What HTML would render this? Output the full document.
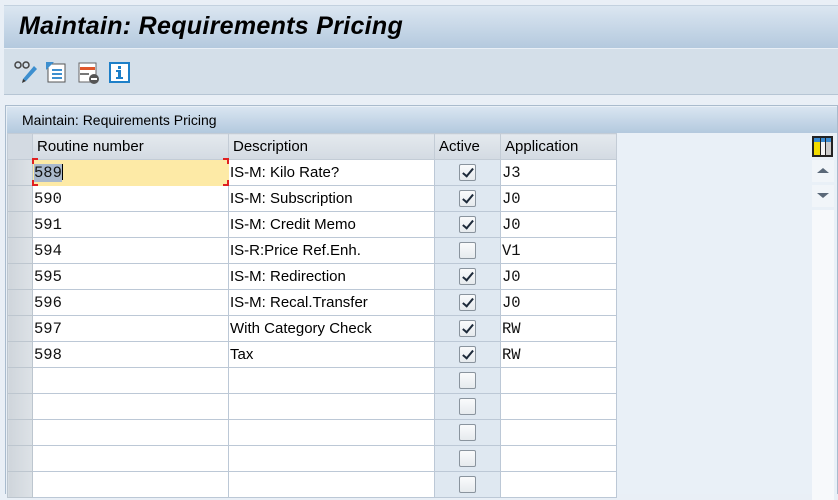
<!DOCTYPE html>
<html><head><style>
*{margin:0;padding:0;box-sizing:border-box}
body{width:838px;height:494px;overflow:hidden;background:#e9eff6;font-family:"Liberation Sans",sans-serif;position:relative}
.title{position:absolute;left:4px;top:5px;width:834px;height:43px;background:linear-gradient(#dbe6f1,#b4c9de);border-top:1px solid #c3d1df}
.title span{position:absolute;left:15px;top:6px;font-size:25px;font-weight:bold;font-style:italic;color:#000;letter-spacing:0.3px}
.tb{position:absolute;left:4px;top:49px;width:834px;height:46px;background:#d4dfe9;border-bottom:1px solid #b6c5d4}
.panel{position:absolute;left:5px;top:105px;width:833px;height:389px;border:1px solid #a9bbcd;border-bottom:none;background:#e9f0f7}
.ph{position:absolute;left:1px;top:1px;width:830px;height:26px;background:linear-gradient(#d9e5f1,#b3c9de)}
.ph span{position:absolute;left:15px;top:5px;font-size:14px;color:#000}
table{position:absolute;left:7px;top:133px;border-collapse:collapse;table-layout:fixed}
td{height:26px;border:1px solid #bcc8d6;background:#fff;font-size:15px;padding:0 0 0 1px;white-space:nowrap;overflow:hidden;vertical-align:middle}
tr.h td{background:linear-gradient(#e4e9ee,#d3dae2);font-size:15px;padding-left:4px;border-color:#c3ccd6}
td.s{background:linear-gradient(90deg,#cfd5db,#dde2e7);border-color:#bdc6cf;padding:0}
tr.h td.s{background:#d3dae2}
td.a{background:#dfe8f1;text-align:center;padding:0}
td.m{font-family:"Liberation Mono",monospace;font-size:15.5px;color:#111}
.cb{display:inline-block;width:17px;height:17px;border:1px solid #8a949e;border-radius:2px;background:linear-gradient(#fafbfc,#e6eaee);vertical-align:middle;position:relative}
.cb.k:after{content:"";position:absolute;left:5px;top:1px;width:4px;height:9px;border:solid #1d2a3a;border-width:0 2px 2px 0;transform:rotate(40deg)}
.sb{position:absolute;left:810px;top:135px;width:24px;height:359px}
</style></head><body>
<div class="title"><span>Maintain: Requirements Pricing</span></div>
<div class="tb">
<svg style="position:absolute;left:10px;top:9px" width="120" height="26" viewBox="0 0 120 26">
 <circle cx="4" cy="7" r="3" fill="none" stroke="#444" stroke-width="1.5"/><circle cx="12" cy="7" r="3" fill="none" stroke="#444" stroke-width="1.5"/>
 <path d="M9 21 L20 8 L23 11 L12 23 Z" fill="#3d8fcf"/><path d="M9 21 L8 25 L12 23Z" fill="#333"/>
 <rect x="34" y="6" width="17" height="18" fill="#fff" stroke="#555"/><path d="M32 4 L40 4 L32 12Z" fill="#3d8fcf"/>
 <rect x="38" y="11" width="10" height="2" fill="#3d8fcf"/><rect x="38" y="15" width="10" height="2" fill="#3d8fcf"/><rect x="38" y="19" width="10" height="2" fill="#3d8fcf"/>
 <rect x="65" y="5" width="17" height="19" fill="#fff" stroke="#666"/><rect x="66" y="9" width="15" height="3" fill="#e0572b"/><rect x="66" y="15" width="9" height="2" fill="#777"/>
 <circle cx="80" cy="21" r="5" fill="#555"/><rect x="77" y="20" width="6" height="2" fill="#fff"/>
 <rect x="96" y="5" width="19" height="19" fill="#fff" stroke="#1d7fc8" stroke-width="2"/><rect x="104" y="8" width="3" height="3" fill="#1d7fc8"/><rect x="104" y="12" width="3" height="9" fill="#1d7fc8"/><rect x="102" y="12" width="3" height="2" fill="#1d7fc8"/><rect x="102" y="19" width="7" height="2" fill="#1d7fc8"/>
</svg>
</div>
<div class="panel"><div class="ph"><span>Maintain: Requirements Pricing</span></div></div>
<table>
<colgroup><col style="width:25px"><col style="width:196px"><col style="width:206px"><col style="width:66px"><col style="width:116px"></colgroup>
<tr class="h"><td class="s"></td><td>Routine number</td><td>Description</td><td style="padding-left:4px">Active</td><td>Application</td></tr>
<tr><td class="s"></td><td class="m" style="background:#fdeaa6;border:1px solid #fdeaa6"><span style="background:#aab9cc">589</span><span style="display:inline-block;width:1px;height:16px;background:#000;vertical-align:middle"></span></td><td>IS-M: Kilo Rate?</td><td class="a"><span class="cb k"></span></td><td class="m">J3</td></tr>
<tr><td class="s"></td><td class="m">590</td><td>IS-M: Subscription</td><td class="a"><span class="cb k"></span></td><td class="m">J0</td></tr>
<tr><td class="s"></td><td class="m">591</td><td>IS-M: Credit Memo</td><td class="a"><span class="cb k"></span></td><td class="m">J0</td></tr>
<tr><td class="s"></td><td class="m">594</td><td>IS-R:Price Ref.Enh.</td><td class="a"><span class="cb"></span></td><td class="m">V1</td></tr>
<tr><td class="s"></td><td class="m">595</td><td>IS-M: Redirection</td><td class="a"><span class="cb k"></span></td><td class="m">J0</td></tr>
<tr><td class="s"></td><td class="m">596</td><td>IS-M: Recal.Transfer</td><td class="a"><span class="cb k"></span></td><td class="m">J0</td></tr>
<tr><td class="s"></td><td class="m">597</td><td>With Category Check</td><td class="a"><span class="cb k"></span></td><td class="m">RW</td></tr>
<tr><td class="s"></td><td class="m">598</td><td>Tax</td><td class="a"><span class="cb k"></span></td><td class="m">RW</td></tr>
<tr><td class="s"></td><td></td><td></td><td class="a"><span class="cb"></span></td><td></td></tr>
<tr><td class="s"></td><td></td><td></td><td class="a"><span class="cb"></span></td><td></td></tr>
<tr><td class="s"></td><td></td><td></td><td class="a"><span class="cb"></span></td><td></td></tr>
<tr><td class="s"></td><td></td><td></td><td class="a"><span class="cb"></span></td><td></td></tr>
<tr><td class="s"></td><td></td><td></td><td class="a"><span class="cb"></span></td><td></td></tr>
</table>
<div style="position:absolute;left:32px;top:158px;width:197px;height:28px;pointer-events:none">
 <div style="position:absolute;left:0;top:0;width:6px;height:6px;border-left:2px solid #e02020;border-top:2px solid #e02020"></div>
 <div style="position:absolute;right:0;top:0;width:6px;height:6px;border-right:2px solid #e02020;border-top:2px solid #e02020"></div>
 <div style="position:absolute;left:0;bottom:0;width:6px;height:6px;border-left:2px solid #e02020;border-bottom:2px solid #e02020"></div>
 <div style="position:absolute;right:0;bottom:0;width:6px;height:6px;border-right:2px solid #e02020;border-bottom:2px solid #e02020"></div>
</div>
<div class="sb">
 <div style="position:absolute;left:2px;top:1px;width:21px;height:21px;border:2px solid #222;background:#ccc">
  <div style="position:absolute;left:0;top:0;width:17px;height:4px;background:#3a8ad0"></div>
  <div style="position:absolute;left:0;top:4px;width:6px;height:13px;background:#f2dc00"></div>
  <div style="position:absolute;left:6px;top:0;width:1px;height:17px;background:#222"></div>
  <div style="position:absolute;left:11px;top:0;width:1px;height:17px;background:#222"></div>
  <div style="position:absolute;left:7px;top:4px;width:4px;height:13px;background:#f4f4f4"></div>
 </div>
 <div style="position:absolute;left:2px;top:25px;width:22px;height:22px;background:#f1f5f9"><div style="position:absolute;left:5px;top:8px;border:6px solid transparent;border-bottom:5px solid #5a6878;border-top:0"></div></div>
 <div style="position:absolute;left:2px;top:50px;width:22px;height:22px;background:#f1f5f9"><div style="position:absolute;left:5px;top:8px;border:6px solid transparent;border-top:5px solid #5a6878;border-bottom:0"></div></div>
 <div style="position:absolute;left:2px;top:75px;width:22px;height:290px;background:#f7f9fb"></div>
</div>
</body></html>
